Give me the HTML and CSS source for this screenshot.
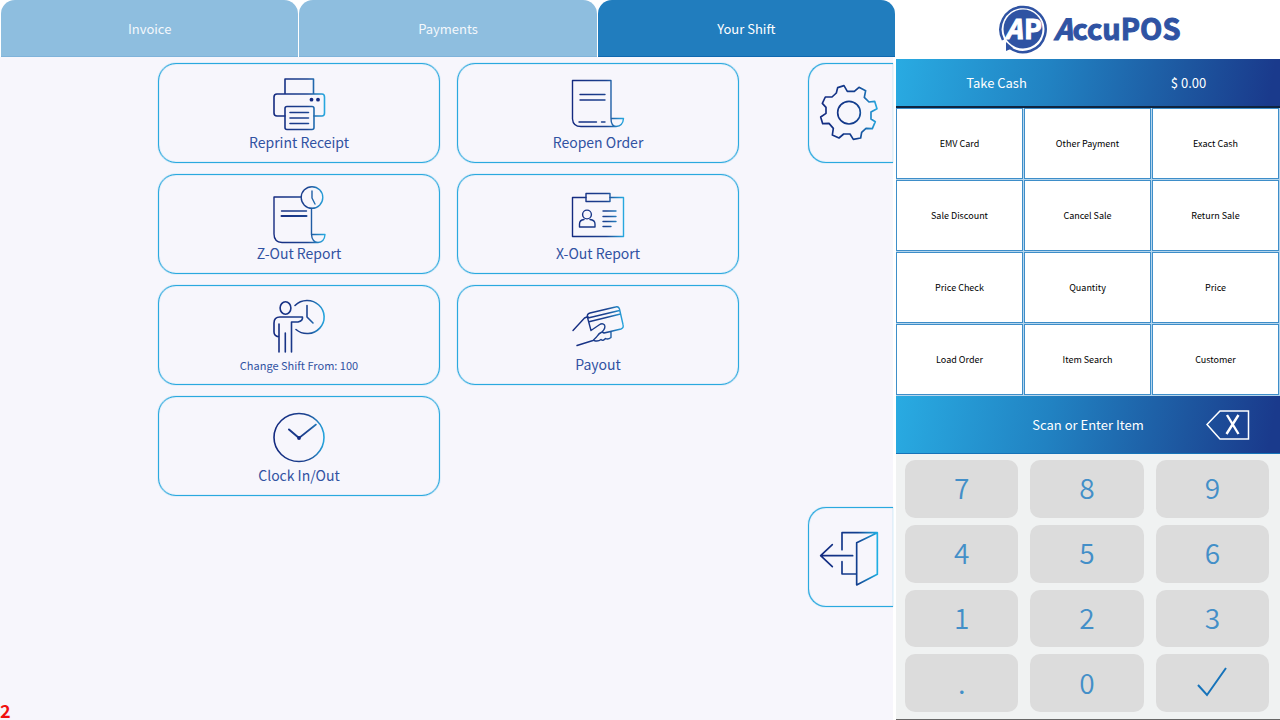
FILE: index.html
```html
<!DOCTYPE html>
<html lang="en">
<head>
<meta charset="utf-8">
<title>AccuPOS</title>
<meta name="viewport" content="width=device-width, initial-scale=1">
<link rel="stylesheet" href="styles.css">
</head>
<body>
<svg class="defs" width="0" height="0" aria-hidden="true">
  <defs>
    <linearGradient id="ink" gradientUnits="userSpaceOnUse" x1="5" y1="0" x2="56" y2="0">
      <stop offset="0" stop-color="#142a80"/><stop offset=".65" stop-color="#1d4390"/><stop offset="1" stop-color="#27aae1"/>
    </linearGradient>
    <linearGradient id="ink-gear" gradientUnits="userSpaceOnUse" x1="840" y1="0" x2="1012" y2="0">
      <stop offset="0" stop-color="#142a80"/><stop offset=".65" stop-color="#123f8f"/><stop offset="1" stop-color="#27aae1"/>
    </linearGradient>
    <linearGradient id="ink-door" gradientUnits="userSpaceOnUse" x1="90" y1="0" x2="263" y2="0">
      <stop offset="0" stop-color="#142a80"/><stop offset=".65" stop-color="#123f8f"/><stop offset="1" stop-color="#1fb0e4"/>
    </linearGradient>
  </defs>
</svg>
<div class="app">
  <main class="work">
    <nav class="tabs">
      <button class="tab">Invoice</button>
      <button class="tab">Payments</button>
      <button class="tab tab-active">Your Shift</button>
    </nav>
    <section class="shift">
      <div class="cards">
        <button class="card left">
          <svg class="icon" viewBox="0 0 60 60">
            <path d="M16 23V8H44.500V23M16 45H8Q5 45 5 42V26Q5 23 8 23H53Q55.500 23 55.500 26V42Q55.500 45 53 45H45"/>
            <rect x="16" y="35.500" width="29" height="23" rx="2"/>
            <path d="M21 41.500H39.500M21 47H39.500M21 52.500H39.500"/>
            <circle class="dot" cx="42.500" cy="28.700" r="1.900"/><circle class="dot" cx="49" cy="28.700" r="1.900"/>
          </svg>
          <span class="label">Reprint Receipt</span>
        </button>
        <button class="card right">
          <svg class="icon thin" viewBox="0 0 60 60">
            <path d="M43 47.500V9.500H4.500V48Q5 55.500 13 55.500H48Q55 55 55.500 47.500H43Q43 55 48 55.500M12 23.500H37M12 29H37M11 51H28.500M33.500 51H37"/>
          </svg>
          <span class="label">Reopen Order</span>
        </button>
        <button class="card side" aria-label="Settings">
          <svg class="icon gear" viewBox="837 69 180 180">
            <path d="M893 83L912 77L922 94H943L957 82L977 92L973 112L987 126L1004 124L1011 146L993 156V177L1006 185L997 206L978 205L965 217L962 234L940 238L930 222H911L897 234L877 225L880 205L867 190L848 191L842 171L858 160V142L847 130L856 111L876 111L889 99Z"/>
            <circle cx="927" cy="158" r="34"/>
          </svg>
        </button>
        <button class="card left">
          <svg class="icon thin" viewBox="0 0 60 60">
            <path d="M32 15H5V52Q5 60 13 60.500H49Q55.500 60 56 52.500H42.500V26.500M42.500 52.500Q43 60 49 60.500M12.500 29H37.500"/>
            <path class="heavy" d="M12.500 34H37.500"/>
            <circle cx="43" cy="15.500" r="10.800"/><path d="M43 9V16L46 22"/>
          </svg>
          <span class="label">Z-Out Report</span>
        </button>
        <button class="card right">
          <svg class="icon thin" viewBox="0 0 60 60">
            <path d="M18 15.500H4.500V54.500H55.500V15.500H42M35 29H48M35 34.500H48M35 39.500H48M35 44.500H43"/>
            <rect x="18" y="11.500" width="24" height="8"/>
            <circle cx="19" cy="32.500" r="4.400"/>
            <path d="M16 37.500Q11.500 38 11.500 42V45H27V42Q27 38 22 37.500"/>
          </svg>
          <span class="label">X-Out Report</span>
        </button>
        <button class="card left">
          <svg class="icon" viewBox="0 0 60 60">
            <ellipse cx="16.500" cy="15" rx="5.400" ry="6.200"/>
            <path d="M10 44Q5 43 5 39V30Q5 24 11 24H33.500Q34 28 29 29H22.500V59M10 31V59M16.300 40V59"/>
            <path d="M26 12.500A17 16.500 0 1 1 27 36.500M38 12.500V24L44 30"/>
          </svg>
          <span class="label small">Change Shift From: 100</span>
        </button>
        <button class="card right">
          <svg class="icon thin" viewBox="0 0 60 60">
            <path d="M5 37.500L16.500 25L20 23.500M36 40L53 36Q56 35 55 31.500L51.500 16Q50.500 13 47.500 14L22 20Q18.500 21 19.500 24.500L23 37.500L31 32Q34.500 29.500 36.500 32Q38 35 34 39Q31 40 28.500 44L25 47.500L9 52.500M20 25L51.500 17.500M21 28.700L52.500 21M43 38.500V44.500Q40 47 37.500 45.500Q35 48.500 33 46.500Q30 49 26 47.500M34 39L36 40L43 38.500"/>
          </svg>
          <span class="label">Payout</span>
        </button>
        <button class="card left">
          <svg class="icon" viewBox="0 0 60 60">
            <ellipse cx="30" cy="33.500" rx="25" ry="24"/>
            <path class="heavy" d="M20 25.500L30 34"/><path d="M30 34L47 20.500"/>
            <circle class="dot" cx="30" cy="34" r="1.900"/>
          </svg>
          <span class="label">Clock In/Out</span>
        </button>
        <button class="card side last" aria-label="Exit">
          <svg class="icon door" viewBox="87 80 180 180">
            <path d="M156 148V97H262L200 127V254L262 222V97M156 184V221H200M188 166H92M127 133L92 166L127 199"/>
          </svg>
        </button>
      </div>
      <div class="status">2</div>
    </section>
  </main>
  <aside class="till">
    <header class="brand">
      <svg class="logo" viewBox="0 0 180 50" role="img" aria-label="AccuPOS">
        <circle cx="25" cy="24" r="19.500"/>
        <path class="ring" d="M5 35A22.600 22.600 0 1 1 12 43"/>
        <path d="M8 46V37L15 43Z"/>
        <text class="mono" x="7" y="34"><tspan class="slant">A</tspan></text>
        <text class="mono" x="26" y="34">P</text>
        <text class="name" x="56" y="35"><tspan class="slant">A</tspan>ccuPOS</text>
      </svg>
    </header>
    <button class="total"><span>Take Cash</span><span>$ 0.00</span></button>
    <div class="actions">
      <button>EMV Card</button><button>Other Payment</button><button>Exact Cash</button>
      <button>Sale Discount</button><button>Cancel Sale</button><button>Return Sale</button>
      <button>Price Check</button><button>Quantity</button><button>Price</button>
      <button>Load Order</button><button>Item Search</button><button>Customer</button>
    </div>
    <div class="entry">
      <span class="prompt">Scan or Enter Item</span>
      <button class="erase" aria-label="Clear entry">
        <svg viewBox="0 0 44 30"><path d="M1 14.500L14 1H42.500V29H14Z"/><path class="cross" d="M21 5L32.500 24M32.500 5L20.500 24"/></svg>
      </button>
    </div>
    <div class="keypad">
      <button>7</button><button>8</button><button>9</button>
      <button>4</button><button>5</button><button>6</button>
      <button>1</button><button>2</button><button>3</button>
      <button>.</button><button>0</button>
      <button aria-label="Enter"><svg class="check" viewBox="0 0 30 30"><path d="M1 18L10 28L29 1"/></svg></button>
    </div>
  </aside>
</div>
</body>
</html>
```
FILE: styles.css
```css
* { box-sizing: border-box; }
body {
  margin: 0;
  background: #fff;
  font-family: "Noto Sans CJK SC", "Noto Sans", sans-serif;
}
button {
  margin: 0;
  padding: 0;
  border: 0;
  background: none;
  font: inherit;
  color: inherit;
  cursor: pointer;
}
svg { display: block; }
.defs { position: absolute; }
.app {
  display: grid;
  grid-template-columns: 7fr 3fr;
  min-height: 100vh;
}
.work { display: flex; flex-direction: column; }
.tabs {
  display: grid;
  grid-template-columns: repeat(3, 1fr);
  gap: 1px;
  padding: 0 1px;
}
.tab {
  height: 57px;
  border-radius: 14px 14px 0 0;
  background: #8ebedf;
  color: #f4f8fc;
  font-size: 13px;
  border-bottom: 1px solid #7fb3da;
}
.tab-active { background: #217dbe; color: #fff; border-bottom-color: #0f68b0; }
.shift {
  flex: 1;
  display: flex;
  flex-direction: column;
  margin-right: 3px;
  padding-top: 6px;
  background: #f7f6fc;
}
.cards {
  display: grid;
  grid-template-columns: 141fr 282fr 282fr 35fr 85fr;
  grid-auto-rows: 100px;
  gap: 11px 17px;
}
.card {
  display: flex;
  flex-direction: column;
  align-items: center;
  padding-top: 7px;
  border: 1px solid #2aa9df;
  border-radius: 18px;
  box-shadow: inset 0 0 1px 0 #2aa9df, 0 0 1px 0 #2aa9df;
  color: #3152a2;
}
.left { grid-column: 2; }
.right { grid-column: 3; }
.side {
  grid-column: 5;
  justify-content: center;
  padding: 0 4px 0 0;
  border-right: 0;
  border-radius: 18px 0 0 18px;
}
.last { grid-row: 5; }
.icon {
  width: 60px;
  height: 60px;
  overflow: visible;
  fill: none;
  stroke: url(#ink);
  stroke-width: 1.6;
  stroke-linecap: round;
  stroke-linejoin: round;
}
.thin { stroke-width: 1.4; }
.heavy { stroke-width: 2; }
.dot { fill: #142a80; stroke: none; }
.gear { stroke: url(#ink-gear); stroke-width: 5; }
.door { stroke: url(#ink-door); stroke-width: 5; }
.label { font-size: 14px; line-height: 22px; }
.small { font-size: 11px; line-height: 24px; }
.status {
  margin-top: auto;
  color: #f01010;
  font-size: 18px;
  font-weight: 700;
  line-height: 20px;
}
.till { display: flex; flex-direction: column; background: #fff; }
.brand {
  display: flex;
  justify-content: center;
  height: 59px;
  padding-top: 5px;
}
.logo { width: 180px; height: 50px; overflow: visible; fill: #2f53a3; }
.ring { fill: none; stroke: #2f53a3; stroke-width: 2.5; }
.mono { fill: #fff; stroke: #fff; stroke-width: 1; font-size: 27px; font-weight: 700; }
.name { font-size: 29px; font-weight: 700; stroke: #2f53a3; stroke-width: 1; }
.slant { font-style: italic; }
.total, .entry {
  background: linear-gradient(100deg, #29abe2 0%, #2182c2 40%, #1d569f 75%, #1a3a8c 97%);
  color: #fff;
  font-size: 13px;
}
.total {
  display: grid;
  grid-template-columns: 201fr 183fr;
  align-items: center;
  height: 49px;
  border-bottom: 2px solid #0e2440;
}
.actions {
  display: grid;
  grid-template-columns: repeat(3, 1fr);
  grid-auto-rows: 71px;
  gap: 1px;
  padding-right: 1px;
  padding-bottom: 1px;
  background: #b5d5ec;
}
.actions button {
  border: 1px solid #3e8ec9;
  background: #fff;
  color: #000;
  font-size: 9px;
}
.entry {
  display: grid;
  grid-template-columns: 1fr auto 1fr;
  align-items: center;
  height: 58px;
  border-bottom: 1px solid #1673b8;
}
.prompt { grid-column: 2; }
.erase { justify-self: end; margin-right: 30px; }
.erase svg { width: 44px; height: 30px; fill: none; stroke: #fff; stroke-width: 1.5; }
.erase .cross { stroke-width: 2.4; }
.keypad {
  flex: 1;
  display: grid;
  grid-template-columns: repeat(3, 1fr);
  gap: 7px 12px;
  padding: 6px 11px 7px 9px;
  border-bottom: 1px solid #666;
  background: #f0f2f2;
}
.keypad button {
  display: flex;
  align-items: center;
  justify-content: center;
  min-height: 40px;
  padding-bottom: 3px;
  border-radius: 10px;
  background: #dcdcdc;
  color: #438fc8;
  font-size: 28px;
  font-weight: 350;
  line-height: 40px;
}
.check { width: 30px; height: 30px; fill: none; stroke: #1673ba; stroke-width: 2; }
```
